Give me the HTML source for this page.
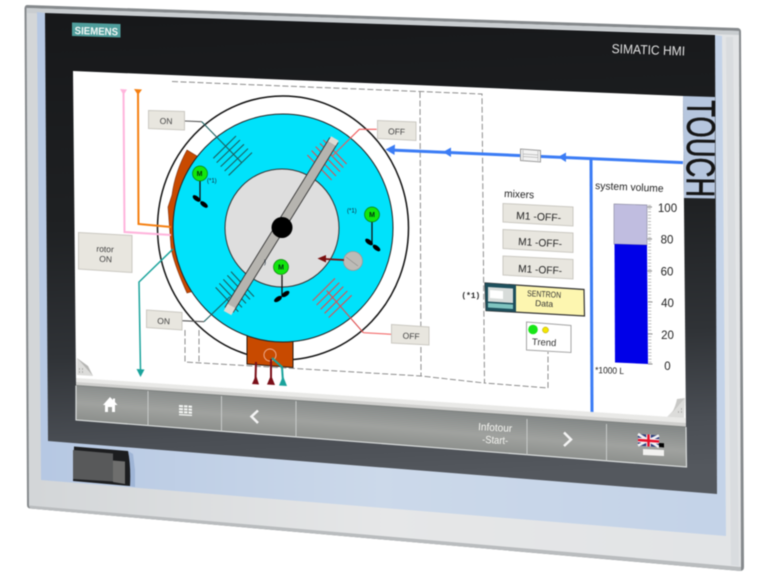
<!DOCTYPE html>
<html>
<head>
<meta charset="utf-8">
<title>SIMATIC HMI</title>
<style>
html,body{margin:0;padding:0;background:#fff;width:768px;height:576px;overflow:hidden}
svg{display:block;filter:blur(.45px)}
text{font-family:"Liberation Sans",sans-serif}
</style>
</head>
<body>
<svg width="768" height="576" viewBox="0 0 768 576" xmlns="http://www.w3.org/2000/svg">
<defs>
<linearGradient id="blk" gradientUnits="userSpaceOnUse" x1="0" y1="13" x2="20" y2="494">
<stop offset="0" stop-color="#17181a"/><stop offset=".45" stop-color="#1f2123"/><stop offset=".72" stop-color="#303337"/><stop offset=".9" stop-color="#4a4e54"/><stop offset="1" stop-color="#54585e"/>
</linearGradient>
<linearGradient id="bar" gradientUnits="userSpaceOnUse" x1="383" y1="406" x2="380" y2="444">
<stop offset="0" stop-color="#868a89"/><stop offset=".55" stop-color="#a0a29f"/><stop offset="1" stop-color="#8c8f8c"/>
</linearGradient>
<linearGradient id="lb" gradientUnits="userSpaceOnUse" x1="40" y1="0" x2="720" y2="0">
<stop offset="0" stop-color="#b6c8e3"/><stop offset=".5" stop-color="#ccd9ea"/><stop offset="1" stop-color="#c4d3e8"/>
</linearGradient>
<linearGradient id="sil" gradientUnits="userSpaceOnUse" x1="28" y1="0" x2="743" y2="0">
<stop offset="0" stop-color="#d3d6d8"/><stop offset=".5" stop-color="#e6e7e8"/><stop offset="1" stop-color="#e2e4e6"/>
</linearGradient>
</defs>

<!-- outer case -->
<path d="M27,5 L738,28 Q741,28.500 741,32 L744,567 Q744,571 740,571 L30,508.500 Q27,508 27,505 L24.500,8 Q25,5 27,5Z" fill="#85898c"/>
<path d="M26.500,8 L739,31 L741,568 L29,506.500Z" fill="url(#sil)"/>
<path d="M26.500,8 L739,31 L739,35 L27,13Z" fill="#c9cdd0"/>
<path d="M29,505.500 L741,567 L741,571 L30,508.500Z" fill="#b9bcbe"/>
<!-- pale blue inner -->
<path d="M37,12 L45,13 L715,35 L722,36 L726,536 L41,480Z" fill="url(#lb)"/>
<path d="M726,37 L733,37 L739,566 L731,565Z" fill="#d3d7db" opacity=".6"/>
<!-- black face -->
<path d="M45,13 L715,35 L717,494 L48,441Z" fill="url(#blk)"/>
<!-- logo & label -->
<path d="M72,22.500 L120.500,24 L120.500,37.500 L72,36Z" fill="#4f9d9b"/>
<text x="74.500" y="34" font-size="10.500" font-weight="bold" fill="#eef5f4" textLength="43.500" lengthAdjust="spacingAndGlyphs" transform="rotate(1.800 74 34)">SIEMENS</text>
<text x="611.500" y="53" font-size="13" fill="#e2e2e2" textLength="73.500" lengthAdjust="spacingAndGlyphs" transform="rotate(2 612 53)">SIMATIC HMI</text>

<!-- screen -->
<path d="M73,71 L683,96 L686,428 L76,386Z" fill="#fff"/>
<!-- touch strip -->
<path d="M683,96 L715,97 L715,198.500 L684,198Z" fill="#b6c6de"/>
<text font-size="40" fill="#151515" stroke="#151515" stroke-width=".6" textLength="97" lengthAdjust="spacingAndGlyphs" transform="translate(687.500,100) rotate(90.600)">TOUCH</text>

<!-- dashed frame -->
<g fill="none" stroke="#8d8d8d" stroke-width="1" stroke-dasharray="6 2.500">
<path d="M172,81.500 L482,94 L484.500,383 L548,388 L548,352"/>
<path d="M420,92 L421,376"/>
<path d="M185,330 L185,362 L421,376 L484,383"/>
<path d="M199,330 L199,362"/>
</g>

<!-- rotor -->
<ellipse cx="283" cy="228" rx="125.500" ry="132" fill="#fff" stroke="#111" stroke-width="1.500"/>
<path d="M187,150 L197,156 L205,250 L194,291 L187,293 Q173,262 171,247 L168,207 L172,195 Q175,172 187,150Z" fill="#c84a00" stroke="#7a3010" stroke-width=".6"/>
<path d="M247,325 L293,325 L293,367.500 L247,364Z" fill="#c84a00" stroke="#2a1a10" stroke-width="1"/>
<ellipse cx="283" cy="228" rx="110" ry="114" fill="#00e2fb" stroke="#222" stroke-width="1"/>
<ellipse cx="282" cy="228" rx="57" ry="59" fill="#dedede" stroke="#333" stroke-width="1"/>
<circle cx="270" cy="355" r="6" fill="none" stroke="#eda98a" stroke-width="1"/>

<!-- hatches -->
<g transform="translate(150,90) scale(.3333)" fill="none" stroke-width="3.300">
<g stroke="#1c5f60">
<path d="M190,205 L258,138 M200,218 L270,150 M212,230 L282,163 M224,243 L294,176 M236,256 L306,188"/>
<path d="M104,93 L155,95" stroke="#555"/>
<path d="M155,95 L275,218"/>
</g>
<g stroke="#df4f50">
<path d="M472,195 L545,270 M485,182 L558,258 M497,170 L570,245 M510,160 L580,233 M520,150 L590,222"/>
</g>
<path d="M680,118 L628,118 L545,200" stroke="#f05a5a"/>
</g>
<g transform="translate(130,230) scale(.3333)" fill="none" stroke-width="3.300">
<g stroke="#1c5f60">
<path d="M257,172 L325,245 M268,160 L336,232 M280,148 L348,220 M292,136 L360,208 M303,125 L372,200"/>
<path d="M222,275 L300,200"/>
<path d="M155,272 L222,275" stroke="#555"/>
</g>
<g stroke="#df4f50">
<path d="M548,212 L615,145 M560,225 L628,158 M572,238 L640,170 M584,250 L652,183 M596,263 L665,196"/>
<path d="M590,182 L700,308"/>
</g>
<path d="M700,308 L785,313" stroke="#f36b6b"/>
</g>

<!-- arm -->
<path d="M229,310 L334,140" stroke="#2c2c2c" stroke-width="10.500"/>
<path d="M229,310 L334,140" stroke="#b6b4af" stroke-width="8.800"/>
<path d="M231.500,306 L227.500,313" stroke="#dedbd4" stroke-width="8.800"/>
<path d="M332,143.500 L335,138.500" stroke="#dedbd4" stroke-width="8.800"/>
<circle cx="282" cy="227.500" r="10.500" fill="#000"/>

<!-- motors -->
<g stroke="#111" fill="none">
<path d="M200,181 L200,201 M372,222 L372,245 M282,275 L282,296" stroke-width="1.300"/>
</g>
<g fill="#000">
<ellipse cx="196.500" cy="198.500" rx="4.500" ry="2.300" transform="rotate(38 196.500 198.500)"/>
<ellipse cx="204" cy="204.500" rx="4.500" ry="2.300" transform="rotate(38 204 204.500)"/>
<ellipse cx="369" cy="242" rx="4.500" ry="2.300" transform="rotate(38 369 242)"/>
<ellipse cx="376.500" cy="248" rx="4.500" ry="2.300" transform="rotate(38 376.500 248)"/>
<ellipse cx="278" cy="299" rx="4.500" ry="2.300" transform="rotate(-34 278 299)"/>
<ellipse cx="285.500" cy="294" rx="4.500" ry="2.300" transform="rotate(-34 285.500 294)"/>
</g>
<g stroke="#0c7c0c" stroke-width=".7" fill="#12e60e">
<circle cx="200" cy="173.500" r="7.500"/>
<circle cx="372" cy="214.500" r="7.500"/>
<circle cx="281" cy="267" r="7.500"/>
</g>
<g font-size="7" font-weight="bold" fill="#031" text-anchor="middle">
<text x="199.500" y="176">M</text>
<text x="372" y="217">M</text>
<text x="281" y="269.500">M</text>
</g>
<g font-size="6" fill="#123">
<text x="207" y="182.500">(*1)</text>
<text x="347" y="212.500">(*1)</text>
<text x="264" y="264">)</text>
</g>

<!-- grey pump -->
<circle cx="353" cy="261" r="9.500" fill="#bdbbb6" stroke="#999" stroke-width=".8"/>
<path d="M346,257 L358,266" stroke="#8e8e8a" stroke-width=".7"/>
<path d="M344,260 L325,259" stroke="#7a1010" stroke-width="1.800"/>
<path d="M317.500,258.500 L326,255 L326,262.500Z" fill="#7a1010"/>

<!-- feed lines -->
<path d="M123.500,90 L124.500,232 L171,235" fill="none" stroke="#ffb4dc" stroke-width="2"/>
<path d="M120,89 L127,89.500 L123.500,95Z" fill="#ffb4dc"/>
<path d="M138,90 L138.500,224 L171,227" fill="none" stroke="#f57f10" stroke-width="2"/>
<path d="M134,89 L142,89.500 L138,95Z" fill="#f57f10"/>
<path d="M173,249 L139,282 L140.500,370" fill="none" stroke="#1aa39c" stroke-width="1.500"/>
<path d="M136.500,369 L144.500,369.500 L140.500,377Z" fill="#1aa39c"/>
<path d="M256,362 L255.500,380" stroke="#7a0f18" stroke-width="2"/>
<path d="M252,384 L256,375 L259,384.500Z" fill="#7a0f18"/>
<path d="M271,359 L271,381" stroke="#7a0f18" stroke-width="2"/>
<path d="M267,384.500 L271,375 L275,385Z" fill="#7a0f18"/>
<path d="M272,358 L282,367 L283,382" fill="none" stroke="#1aa39c" stroke-width="2"/>
<path d="M279,385.500 L283,376 L287,386Z" fill="#1aa39c"/>

<!-- blue pipe -->
<path d="M683,162.600 L390,150" stroke="#3b7cf5" stroke-width="3"/>
<path d="M591,158.500 L592,414" stroke="#3b7cf5" stroke-width="3"/>
<path d="M385.500,149.500 L395,144.500 L394.500,155Z" fill="#3b7cf5"/>
<path d="M443,152 L451,147.500 L451,157Z" fill="#3b7cf5"/>
<path d="M558,157 L566,152.500 L566,162Z" fill="#3b7cf5"/>
<path d="M520.500,149 L540.500,150.500 L540.500,162 L520.500,160.500Z" fill="#f3f3f3" stroke="#9c9c9c" stroke-width="1"/>
<path d="M523,150 L523,160 M538,151 L538,161 M523,154 L538,155 M523,156.500 L538,157.500" stroke="#b5b5b5" stroke-width=".7" fill="none"/>

<!-- buttons -->
<g fill="#e8e6df" stroke="#cbc9c2" stroke-width="1">
<path d="M148.500,110.500 L184.500,111.500 L184.500,130 L148.500,128.500Z"/>
<path d="M377.500,120.500 L416,122 L416,140.500 L377.500,138.500Z"/>
<path d="M78.500,232.500 L132,235.500 L132,272.500 L78.500,269Z"/>
<path d="M146.500,310 L182,312.500 L182,330 L146.500,327.500Z"/>
<path d="M391.500,324.500 L429,327 L429,345 L391.500,343Z"/>
<path d="M503,203.500 L573,207 L573,226 L503,222Z"/>
<path d="M503,229.500 L573,233 L573,252.500 L503,248.500Z"/>
<path d="M503,256 L573,259.500 L573,279 L503,275Z"/>
</g>
<g font-size="8.500" fill="#444" text-anchor="middle">
<text x="166" y="124" transform="rotate(1.500 166 124)">ON</text>
<text x="396.500" y="134.500" transform="rotate(2 396 134)">OFF</text>
<text x="105" y="252" transform="rotate(2.500 105 252)">rotor</text>
<text x="105.500" y="262" transform="rotate(2.500 105 262)">ON</text>
<text x="163.500" y="324" transform="rotate(3 163 324)">ON</text>
<text x="411" y="339" transform="rotate(3 411 339)">OFF</text>
</g>
<g fill="#222" font-size="10.500">
<text x="504" y="197" transform="rotate(2.500 504 197)" textLength="30" lengthAdjust="spacingAndGlyphs">mixers</text>
<text x="595" y="189" transform="rotate(2.500 595 189)" textLength="68.500" lengthAdjust="spacingAndGlyphs">system volume</text>
<text x="516" y="219" transform="rotate(3 516 219)" textLength="45" lengthAdjust="spacingAndGlyphs">M1 -OFF-</text>
<text x="518" y="245" transform="rotate(3 518 245)" textLength="44" lengthAdjust="spacingAndGlyphs">M1 -OFF-</text>
<text x="518" y="272" transform="rotate(3 518 272)" textLength="44" lengthAdjust="spacingAndGlyphs">M1 -OFF-</text>
</g>

<!-- level bar -->
<path d="M614,204 L647,205 L647,245 L614,244Z" fill="#c0bde0" stroke="#8f8fa5" stroke-width=".7"/>
<path d="M614.500,244 L647,245 L648,364 L615,362.500Z" fill="#0000e8"/>
<path d="M647.500,207 L652,207 M647.500,239 L652,239 M647.500,271 L652,271 M648,302 L652.500,302 M648,334 L652.500,334 M648,364 L652.500,364" stroke="#888" stroke-width="1"/>
<path d="M649.500,205 L650,364" stroke="#bbb" stroke-width="3" stroke-dasharray="1 2.200"/>
<g font-size="11.500" fill="#222" text-anchor="middle">
<text x="667.500" y="212">100</text>
<text x="667" y="243.500">80</text>
<text x="667" y="275.500">60</text>
<text x="667.500" y="307">40</text>
<text x="667.500" y="339">20</text>
<text x="667.500" y="370">0</text>
</g>
<text x="595" y="373" font-size="9" fill="#222" textLength="29" lengthAdjust="spacingAndGlyphs" transform="rotate(2 595 373)">*1000 L</text>

<!-- sentron -->
<text x="461.500" y="298" style="font-family:'Liberation Mono',monospace" font-size="7.800" font-weight="bold" fill="#222">(*1)</text>
<path d="M485,283 L584,289.500 L584.500,316 L486,310.500Z" fill="#fdf6b0" stroke="#333" stroke-width="1.200"/>
<path d="M485,283 L516,285 L516,312 L486,310.500Z" fill="#1d4f5c"/>
<path d="M488,287 L513,288.500 L513,303 L488,301.500Z" fill="#d8dcda"/>
<path d="M488,303 L513,304.500 L513,309 L488,307.500Z" fill="#7fc4c0"/>
<path d="M490,290 L503,291 L503,299 L490,298Z" fill="#fff"/>
<g font-size="8.500" fill="#333" text-anchor="middle">
<text x="544" y="297" transform="rotate(3 544 297)" textLength="34" lengthAdjust="spacingAndGlyphs">SENTRON</text>
<text x="544" y="306.500" transform="rotate(3 544 306)">Data</text>
</g>
<path d="M526.500,322 L571,325.500 L571,352.500 L526.500,350Z" fill="#fff" stroke="#a5a5a5" stroke-width="1"/>
<circle cx="533" cy="329.500" r="4.800" fill="#17e617"/>
<circle cx="545.500" cy="330" r="3" fill="#f4e600" stroke="#a79b00" stroke-width=".5"/>
<text x="544" y="345.500" font-size="9.500" fill="#333" text-anchor="middle" transform="rotate(3 544 345)">Trend</text>

<!-- page curls -->
<path d="M77,358 L93,376 L77,375Z" fill="#dcdcda"/>
<path d="M77,358 L88,366 L93,376Z" fill="#b5b5b3"/>
<path d="M79,369 L80,369 M82,369 L83,369 M79,372 L80,372 M82,372 L83,372" stroke="#a5a5a3" stroke-width="1.500"/>
<path d="M685,398 L667,417 L684,418Z" fill="#dcdcda"/>
<path d="M677,399 L685,398 L672,413 Q676,405 677,399Z" fill="#c8c8c6"/>
<path d="M678,412 L679,412 M681,412 L682,412 M681,409 L682,409" stroke="#a5a5a3" stroke-width="1.500"/>

<!-- light bevel above bar -->
<path d="M76,378 L686,418 L686,427 L76,386Z" fill="#e9e9e7"/>
<path d="M76,382 L686,423 L686,427.500 L76,386Z" fill="#cfcfcd"/>

<!-- command bar -->
<path d="M76,385.500 L686,427 L686.500,467 L76,420Z" fill="url(#bar)"/>
<path d="M76,385.500 L686,427" stroke="#7d817f" stroke-width="1" fill="none"/>
<path d="M76,385.500 L76,420 L686.500,467 L686,427" stroke="#d9dcdc" stroke-width="1.200" fill="none"/>
<g stroke="#c6c9c8" stroke-width="1">
<path d="M148,391 L148,425.500"/>
<path d="M221.500,396 L221.500,431"/>
<path d="M296,401 L296,437"/>
<path d="M527,419 L527,455"/>
<path d="M606.500,424 L606.500,461"/>
</g>
<!-- home -->
<path d="M110,397 L113,400 L113,398.500 L115,398.500 L115,402 L117.500,405 L115,405 L115,412 L112,412 L112,407 L108,407 L108,412 L105,412 L105,405 L103,405Z" fill="#fff"/>
<!-- grid -->
<g fill="#f4f6f4">
<path d="M179,405 L183,405.200 L183,407.200 L179,407Z"/>
<path d="M184,405.200 L187.500,405.400 L187.500,407.400 L184,407.200Z"/>
<path d="M188.500,405.500 L192,405.700 L192,407.700 L188.500,407.500Z"/>
<path d="M179,408 L183,408.200 L183,410.200 L179,410Z"/>
<path d="M184,408.200 L187.500,408.400 L187.500,410.400 L184,410.200Z"/>
<path d="M188.500,408.500 L192,408.700 L192,410.700 L188.500,410.500Z"/>
<path d="M179,411 L183,411.200 L183,413.200 L179,413Z"/>
<path d="M184,411.200 L187.500,411.400 L187.500,413.400 L184,413.200Z"/>
<path d="M188.500,411.500 L192,411.700 L192,413.700 L188.500,413.500Z"/>
<path d="M179,414 L192,414.700 L192,416 L179,415.300Z"/>
</g>
<path d="M258,410.500 L251.500,416.500 L258,423" fill="none" stroke="#f4f4f4" stroke-width="2.500"/>
<path d="M564,432.500 L571,439.500 L564,446" fill="none" stroke="#f4f4f4" stroke-width="2.500"/>
<g font-size="10.500" fill="#f4f4f0" text-anchor="middle">
<text x="495" y="431" transform="rotate(3 495 431)" textLength="34" lengthAdjust="spacingAndGlyphs">Infotour</text>
<text x="495" y="443.500" transform="rotate(3 495 443)" textLength="26" lengthAdjust="spacingAndGlyphs">-Start-</text>
</g>
<!-- flag -->
<path d="M638,434 L659,435.500 L659,447 L638,445.500Z" fill="#2c3a7c"/>
<path d="M638,434 L659,447 M659,435.500 L638,445.500" stroke="#f2f2f4" stroke-width="2.500"/>
<path d="M648.500,434.500 L648.500,446.500 M638,440 L659,441.500" stroke="#f4f4f6" stroke-width="4.500"/>
<path d="M648.500,434.500 L648.500,446.500 M638,440 L659,441.500" stroke="#e8102a" stroke-width="2.500"/>
<path d="M659,443 L664,443.300 L664,447.500 L659,447Z" fill="#000"/>
<path d="M643,449 L664,450 L664,456 L643,455Z" fill="#f2f2f0"/>

<!-- card reader -->
<path d="M128,451 L133,454 L135,470 L135,487 L129,486Z" fill="#9fb5d6"/>
<path d="M74,446.500 L128,451 Q131,465 130,486 L73,481Z" fill="#1c1d1f"/>
<path d="M73,450 L113,453.500 L113,481.500 L73,479Z" fill="#58595a"/>
<path d="M113,460.500 L125,461.500 L125,484 L113,482Z" fill="#6e6e6d"/>
</svg>
</body>
</html>
